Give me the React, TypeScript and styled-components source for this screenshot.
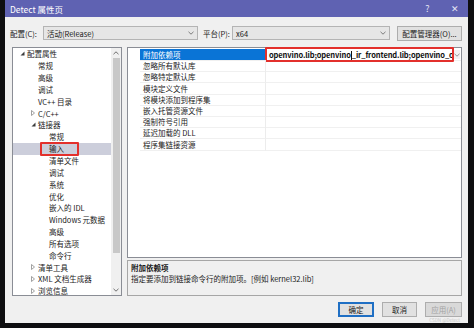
import styled, { createGlobalStyle } from "styled-components";

const GlobalStyle = createGlobalStyle`
  html, body {
    margin: 0;
    padding: 0;
    background: #0e0e10;
  }
  body {
    width: 474px;
    height: 328px;
    overflow: hidden;
    font-family: "Noto Sans CJK SC", "Noto Sans", sans-serif;
  }
`;

const Window = styled.div`
  margin-left: 5px;
  width: 463px;
  height: 323px;
  background: #f0f0f0;
  display: flex;
  flex-direction: column;
  font-size: 7.5px;
  color: #1a1a1a;
`;

const TitleBar = styled.div`
  height: 17px;
  background: #5f62b2;
  color: #ffffff;
  display: flex;
  align-items: center;
  padding-left: 5px;
  font-size: 8.5px;
`;

const Title = styled.span`
  flex: 1;
`;

const TitleButton = styled.span`
  width: 27px;
  text-align: center;
  font-size: 9px;
  color: #e4e5f5;
`;

const ConfigRow = styled.div`
  display: flex;
  align-items: center;
  height: 16px;
  margin-top: 8px;
  padding: 0 6px 0 5px;
`;

const FieldLabel = styled.span<{ $w: number; $ml?: number }>`
  width: ${(p) => p.$w}px;
  margin-left: ${(p) => p.$ml ?? 0}px;
  white-space: nowrap;
`;

const Combo = styled.div<{ $w: number }>`
  width: ${(p) => p.$w}px;
  height: 14px;
  box-sizing: border-box;
  border: 1px solid #b4b4b4;
  background: #e6e6e6;
  display: flex;
  align-items: center;
  padding: 0 3px;
  white-space: nowrap;
`;

const ComboText = styled.span`
  flex: 1;
`;

const PushButton = styled.button<{ $w: number; $ml?: number; $default?: boolean; $disabled?: boolean }>`
  width: ${(p) => p.$w}px;
  height: 15px;
  margin: 0 0 0 ${(p) => p.$ml ?? 0}px;
  padding: 0;
  box-sizing: border-box;
  border: ${(p) => (p.$default ? "2px solid #1f6fc4" : "1px solid #adadad")};
  background: ${(p) => (p.$disabled ? "#d9d9d9" : "#e1e1e1")};
  color: ${(p) => (p.$disabled ? "#a3a3a3" : "#1a1a1a")};
  font-family: inherit;
  font-size: 7.5px;
  white-space: nowrap;
`;

const Main = styled.div`
  display: flex;
  gap: 5px;
  margin-top: 6px;
  padding: 0 6px 0 7px;
  height: 249px;
`;

const Tree = styled.div`
  width: 110px;
  box-sizing: border-box;
  border: 1px solid #8a8d95;
  background: #ffffff;
  display: flex;
`;

const TreeList = styled.div`
  flex: 1;
  overflow: hidden;
`;

const TreeRow = styled.div<{ $level: number; $selected?: boolean }>`
  position: relative;
  height: 11.85px;
  display: flex;
  align-items: center;
  padding-left: ${(p) => 7 + p.$level * 11}px;
  background: ${(p) => (p.$selected ? "#cccedb" : "transparent")};
  white-space: nowrap;
`;

const Twisty = styled.span`
  width: 7px;
  height: 11px;
  display: flex;
  align-items: center;
  flex-shrink: 0;
`;

const RedMark = styled.span<{ $top: number; $bottom: number; $left: number; $right: number }>`
  position: absolute;
  top: ${(p) => p.$top}px;
  bottom: ${(p) => p.$bottom}px;
  left: ${(p) => p.$left}px;
  right: ${(p) => p.$right}px;
  border: 2px solid #e3302c;
  border-radius: 1px;
  pointer-events: none;
`;

const ScrollBar = styled.div`
  width: 10px;
  background: #f0f0f0;
  display: flex;
  flex-direction: column;
  align-items: center;
`;

const ScrollArrow = styled.div`
  height: 10px;
  display: flex;
  align-items: center;
  justify-content: center;
`;

const ScrollTrack = styled.div`
  flex: 1;
  width: 100%;
  display: flex;
  justify-content: center;
`;

const ScrollThumb = styled.div`
  width: 7px;
  height: 195px;
  background: #c8c8c8;
`;

const RightColumn = styled.div`
  width: 335px;
  display: flex;
  flex-direction: column;
  gap: 2px;
`;

const Grid = styled.div`
  height: 211px;
  box-sizing: border-box;
  border: 1px solid #8a8d95;
  background: #ffffff;
  padding-top: 1px;
`;

const GridRow = styled.div`
  display: grid;
  grid-template-columns: 12px 125px 1fr;
  height: 11.2px;
`;

const Gutter = styled.div``;

const NameCell = styled.div<{ $selected?: boolean }>`
  box-sizing: border-box;
  border-bottom: 1px solid #f0f0f0;
  padding-left: 3px;
  display: flex;
  align-items: center;
  white-space: nowrap;
  background: ${(p) => (p.$selected ? "#0a74d6" : "transparent")};
  color: ${(p) => (p.$selected ? "#ffffff" : "#1a1a1a")};
`;

const ValueCell = styled.div`
  position: relative;
  box-sizing: border-box;
  border-bottom: 1px solid #f0f0f0;
  border-left: 1px solid #ececec;
  display: flex;
  align-items: center;
  min-width: 0;
`;

const ValueText = styled.span`
  flex: 1;
  min-width: 0;
  overflow: hidden;
  white-space: nowrap;
  padding-left: 3px;
  font-weight: 700;
  color: #111111;
  letter-spacing: -0.1px;
`;

const Caret = styled.span`
  display: inline-block;
  width: 1px;
  height: 9px;
  background: #111111;
  vertical-align: middle;
`;

const DropButton = styled.span`
  width: 7px;
  height: 9px;
  margin-right: 1px;
  background: #f2f2f2;
  display: flex;
  align-items: center;
  justify-content: center;
`;

const Description = styled.div`
  flex: 1;
  box-sizing: border-box;
  border: 1px solid #a6a6a6;
  background: #f0f0f0;
  padding: 1px 3px 0;
  line-height: 11px;
`;

const DescTitle = styled.div`
  font-weight: 700;
`;

const ButtonRow = styled.div`
  display: flex;
  justify-content: flex-end;
  gap: 8px;
  margin-top: 6px;
  padding-right: 6px;
`;

const Watermark = styled.div`
  flex: 1;
  display: flex;
  align-items: flex-end;
  justify-content: flex-end;
  padding-right: 8px;
  font-size: 4.5px;
  color: #c9c9c9;
`;

const Chevron = ({ color = "#707070" }: { color?: string }) => (
  <svg width="6" height="4" viewBox="0 0 6 4">
    <polyline points="0.5,0.8 3,3.2 5.5,0.8" fill="none" stroke={color} strokeWidth="0.9" />
  </svg>
);

const ChevronUp = () => (
  <svg width="6" height="4" viewBox="0 0 6 4">
    <polyline points="0.5,3.2 3,0.8 5.5,3.2" fill="none" stroke="#606060" strokeWidth="0.9" />
  </svg>
);

const Expanded = () => (
  <svg width="5" height="5" viewBox="0 0 5 5">
    <polygon points="4.5,0.5 4.5,4.5 0.5,4.5" fill="#3c3c3c" />
  </svg>
);

const Collapsed = () => (
  <svg width="4" height="6" viewBox="0 0 4 6">
    <polygon points="0.5,0.5 3.5,3 0.5,5.5" fill="none" stroke="#8a8a8a" strokeWidth="0.8" />
  </svg>
);

type TreeItem = { label: string; level: number; state?: "open" | "closed"; selected?: boolean };

const treeItems: TreeItem[] = [
  { label: "配置属性", level: 0, state: "open" },
  { label: "常规", level: 1 },
  { label: "高级", level: 1 },
  { label: "调试", level: 1 },
  { label: "VC++ 目录", level: 1 },
  { label: "C/C++", level: 1, state: "closed" },
  { label: "链接器", level: 1, state: "open" },
  { label: "常规", level: 2 },
  { label: "输入", level: 2, selected: true },
  { label: "清单文件", level: 2 },
  { label: "调试", level: 2 },
  { label: "系统", level: 2 },
  { label: "优化", level: 2 },
  { label: "嵌入的 IDL", level: 2 },
  { label: "Windows 元数据", level: 2 },
  { label: "高级", level: 2 },
  { label: "所有选项", level: 2 },
  { label: "命令行", level: 2 },
  { label: "清单工具", level: 1, state: "closed" },
  { label: "XML 文档生成器", level: 1, state: "closed" },
  { label: "浏览信息", level: 1, state: "closed" },
];

const gridRows = [
  "附加依赖项",
  "忽略所有默认库",
  "忽略特定默认库",
  "模块定义文件",
  "将模块添加到程序集",
  "嵌入托管资源文件",
  "强制符号引用",
  "延迟加载的 DLL",
  "程序集链接资源",
];

export default function App() {
  return (
    <>
      <GlobalStyle />
      <Window>
        <TitleBar>
          <Title>Detect 属性页</Title>
          <TitleButton>?</TitleButton>
          <TitleButton>✕</TitleButton>
        </TitleBar>

        <ConfigRow>
          <FieldLabel $w={33}>配置(C):</FieldLabel>
          <Combo $w={155}>
            <ComboText>活动(Release)</ComboText>
            <Chevron />
          </Combo>
          <FieldLabel $w={29} $ml={5}>平台(P):</FieldLabel>
          <Combo $w={158}>
            <ComboText>x64</ComboText>
            <Chevron />
          </Combo>
          <PushButton $w={65} $ml={7}>配置管理器(O)...</PushButton>
        </ConfigRow>

        <Main>
          <Tree>
            <TreeList>
              {treeItems.map((item, i) => (
                <TreeRow key={i} $level={item.level} $selected={item.selected}>
                  <Twisty>
                    {item.state === "open" && <Expanded />}
                    {item.state === "closed" && <Collapsed />}
                  </Twisty>
                  {item.label}
                  {item.selected && <RedMark $top={-1} $bottom={-1} $left={27} $right={32} />}
                </TreeRow>
              ))}
            </TreeList>
            <ScrollBar>
              <ScrollArrow>
                <ChevronUp />
              </ScrollArrow>
              <ScrollTrack>
                <ScrollThumb />
              </ScrollTrack>
              <ScrollArrow>
                <Chevron color="#606060" />
              </ScrollArrow>
            </ScrollBar>
          </Tree>

          <RightColumn>
            <Grid>
              {gridRows.map((name, i) => (
                <GridRow key={name}>
                  <Gutter />
                  <NameCell $selected={i === 0}>{name}</NameCell>
                  <ValueCell>
                    {i === 0 && (
                      <>
                        <ValueText>
                          openvino.lib;openvino<Caret />_ir_frontend.lib;openvino_onnx_frontend.lib
                        </ValueText>
                        <DropButton>
                          <Chevron color="#8a8a8a" />
                        </DropButton>
                        <RedMark $top={-2} $bottom={-2} $left={-1} $right={7} />
                      </>
                    )}
                  </ValueCell>
                </GridRow>
              ))}
            </Grid>
            <Description>
              <DescTitle>附加依赖项</DescTitle>
              <div>指定要添加到链接命令行的附加项。[例如 kernel32.lib]</div>
            </Description>
          </RightColumn>
        </Main>

        <ButtonRow>
          <PushButton $w={36} $default>确定</PushButton>
          <PushButton $w={35}>取消</PushButton>
          <PushButton $w={37} $disabled>应用(A)</PushButton>
        </ButtonRow>
        <Watermark>CSDN @Detect</Watermark>
      </Window>
    </>
  );
}
